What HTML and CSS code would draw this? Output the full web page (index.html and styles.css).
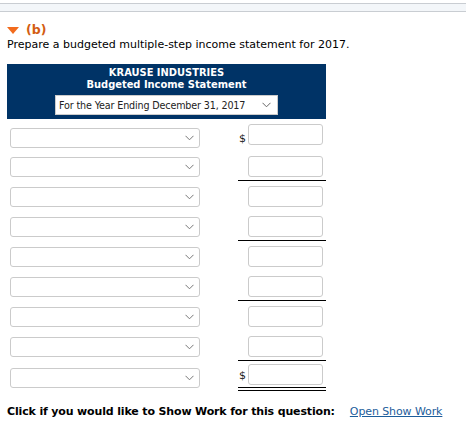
FILE: index.html
```html
<!DOCTYPE html>
<html>
<head>
<meta charset="utf-8">
<link rel="stylesheet" href="styles.css">
</head>
<body>
<div class="topbar"></div>
<div class="page">
  <div class="part">
    <span class="tri"></span><span class="part-label">(b)</span>
  </div>
  <p class="prompt">Prepare a budgeted multiple-step income statement for 2017.</p>

  <div class="sheet">
    <div class="head">
      <div class="co">KRAUSE INDUSTRIES</div>
      <div class="title">Budgeted Income Statement</div>
      <div class="period">
        <span class="period-text">For the Year Ending December 31, 2017</span>
        <svg class="chev" width="9" height="6" viewBox="0 0 9 6"><path d="M0.5 0.8 L4.5 4.8 L8.5 0.8" fill="none" stroke="#666" stroke-width="1"/></svg>
      </div>
    </div>

    <div class="rows">
      <div class="row dollar">
        <div class="sel"><svg class="chev" width="9" height="6" viewBox="0 0 9 6"><path d="M0.5 0.8 L4.5 4.8 L8.5 0.8" fill="none" stroke="#777" stroke-width="1"/></svg></div>
        <div class="amt"><span class="cur">$</span><span class="inp"></span></div>
      </div>
      <div class="row">
        <div class="sel"><svg class="chev" width="9" height="6" viewBox="0 0 9 6"><path d="M0.5 0.8 L4.5 4.8 L8.5 0.8" fill="none" stroke="#777" stroke-width="1"/></svg></div>
        <div class="amt line"><span class="inp"></span></div>
      </div>
      <div class="row">
        <div class="sel"><svg class="chev" width="9" height="6" viewBox="0 0 9 6"><path d="M0.5 0.8 L4.5 4.8 L8.5 0.8" fill="none" stroke="#777" stroke-width="1"/></svg></div>
        <div class="amt"><span class="inp"></span></div>
      </div>
      <div class="row">
        <div class="sel"><svg class="chev" width="9" height="6" viewBox="0 0 9 6"><path d="M0.5 0.8 L4.5 4.8 L8.5 0.8" fill="none" stroke="#777" stroke-width="1"/></svg></div>
        <div class="amt line"><span class="inp"></span></div>
      </div>
      <div class="row">
        <div class="sel"><svg class="chev" width="9" height="6" viewBox="0 0 9 6"><path d="M0.5 0.8 L4.5 4.8 L8.5 0.8" fill="none" stroke="#777" stroke-width="1"/></svg></div>
        <div class="amt"><span class="inp"></span></div>
      </div>
      <div class="row">
        <div class="sel"><svg class="chev" width="9" height="6" viewBox="0 0 9 6"><path d="M0.5 0.8 L4.5 4.8 L8.5 0.8" fill="none" stroke="#777" stroke-width="1"/></svg></div>
        <div class="amt line"><span class="inp"></span></div>
      </div>
      <div class="row">
        <div class="sel"><svg class="chev" width="9" height="6" viewBox="0 0 9 6"><path d="M0.5 0.8 L4.5 4.8 L8.5 0.8" fill="none" stroke="#777" stroke-width="1"/></svg></div>
        <div class="amt"><span class="inp"></span></div>
      </div>
      <div class="row">
        <div class="sel"><svg class="chev" width="9" height="6" viewBox="0 0 9 6"><path d="M0.5 0.8 L4.5 4.8 L8.5 0.8" fill="none" stroke="#777" stroke-width="1"/></svg></div>
        <div class="amt line"><span class="inp"></span></div>
      </div>
      <div class="row dollar">
        <div class="sel"><svg class="chev" width="9" height="6" viewBox="0 0 9 6"><path d="M0.5 0.8 L4.5 4.8 L8.5 0.8" fill="none" stroke="#777" stroke-width="1"/></svg></div>
        <div class="amt dbl"><span class="cur">$</span><span class="inp"></span></div>
      </div>
    </div>
  </div>

  <div class="showwork">
    <span class="sw-label">Click if you would like to Show Work for this question:</span>
    <a class="sw-link" href="#">Open Show Work</a>
  </div>
</div>
</body>
</html>
```

FILE: styles.css
```css
html, body {
  margin: 0;
  padding: 0;
  background: #fff;
}
body {
  font-family: "DejaVu Sans", Verdana, sans-serif;
  font-size: 11px;
  color: #000;
}
.topbar {
  margin-top: 3px;
  height: 7px;
  background: #f3f6f9;
  border-top: 1px solid #c9cdd2;
  border-bottom: 1px solid #c9cdd2;
}
.page {
  padding: 0 7px;
}
.part {
  display: flex;
  align-items: center;
  margin-top: 10px;
  height: 14px;
}
.tri {
  width: 0;
  height: 0;
  border-left: 6px solid transparent;
  border-right: 6px solid transparent;
  border-top: 7px solid #f26b1d;
  margin-right: 7px;
  margin-top: 2px;
}
.part-label {
  font-weight: bold;
  font-size: 12.5px;
  color: #d35d12;
}
.prompt {
  margin: 2px 0 0;
  line-height: 14px;
}
.sheet {
  width: 319px;
  margin-top: 12px;
}
.head {
  background: #003366;
  color: #fff;
  height: 55px;
  display: flex;
  flex-direction: column;
  align-items: center;
  padding-top: 3px;
  box-sizing: border-box;
}
.co, .title {
  font-family: "DejaVu Sans Condensed", "DejaVu Sans", sans-serif;
  font-weight: bold;
  font-size: 11px;
  line-height: 12px;
}
.period {
  margin-top: 4px;
  width: 223px;
  height: 20px;
  box-sizing: border-box;
  background: #fff;
  border: 1px solid #ccc;
  display: flex;
  align-items: center;
  justify-content: space-between;
  padding: 0 6px 0 3px;
  color: #222;
}
.period-text {
  font-size: 9.6px;
  letter-spacing: -0.15px;
}
.rows {
  margin-top: 2px;
  display: flex;
  flex-direction: column;
}
.row {
  display: flex;
  justify-content: space-between;
  height: 30px;
}
.sel {
  margin: 6px 0 0 3px;
  width: 190px;
  height: 20px;
  box-sizing: border-box;
  border: 1px solid #cbcbcb;
  border-radius: 3px;
  display: flex;
  align-items: center;
  justify-content: flex-end;
  padding-right: 5px;
}
.amt {
  width: 88px;
  height: 30px;
  box-sizing: border-box;
  padding: 5px 3px 3px 0;
  display: flex;
  justify-content: flex-end;
  align-items: flex-start;
  border-bottom: 1px solid transparent;
}
.amt.line {
  border-bottom: 1px solid #000;
}
.amt.dbl {
  border-bottom: 4px double #000;
}
.inp {
  width: 75px;
  height: 21px;
  box-sizing: border-box;
  border: 1px solid #cbcbcb;
  border-radius: 3px;
}
.dollar .inp {
  margin-top: -2px;
}
.dollar .sel {
  margin-top: 7px;
}
.cur {
  align-self: flex-end;
  font-size: 11px;
  line-height: 12px;
  margin-right: 2px;
  margin-bottom: 2px;
  color: #1a1a1a;
}
.showwork {
  margin-top: 14px;
  display: flex;
  align-items: baseline;
}
.sw-label {
  font-weight: bold;
  font-size: 11px;
  letter-spacing: -0.15px;
}
.sw-link {
  margin-left: 15px;
  font-size: 11px;
  letter-spacing: -0.1px;
  color: #1c5d9b;
  text-decoration: underline;
}
```
